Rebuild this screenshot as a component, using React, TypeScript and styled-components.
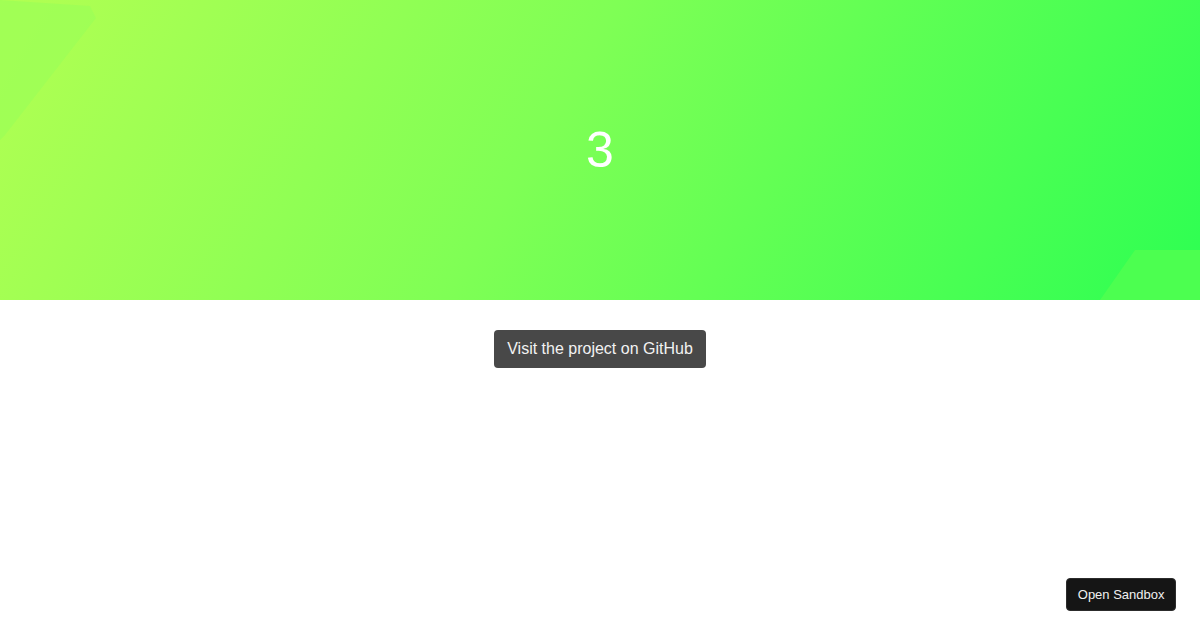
import styled, { createGlobalStyle } from "styled-components";

const GlobalStyle = createGlobalStyle`
  html, body {
    margin: 0;
    padding: 0;
    background: #ffffff;
    font-family: "Liberation Sans", Arial, sans-serif;
  }
`;

const Hero = styled.div`
  position: relative;
  height: 300px;
  display: flex;
  align-items: center;
  justify-content: center;
  overflow: hidden;
  background: linear-gradient(120deg, #b2ff52 0%, #7fff55 45%, #2dff52 100%);
`;

const Slide = styled.span`
  color: #ffffff;
  font-size: 50px;
  font-weight: 400;
  line-height: 1;
`;

const Corner = styled.svg`
  position: absolute;
  pointer-events: none;
`;

const Actions = styled.div`
  display: flex;
  justify-content: center;
  padding-top: 30px;
`;

const GithubButton = styled.a`
  display: inline-flex;
  align-items: center;
  height: 38px;
  padding: 0 13px;
  border-radius: 4px;
  background: #484848;
  color: #f2f2f2;
  font-size: 16px;
  text-decoration: none;
  cursor: pointer;
`;

const SandboxButton = styled.a`
  position: fixed;
  right: 24px;
  bottom: 19px;
  display: inline-flex;
  align-items: center;
  height: 33px;
  padding: 0 10.5px;
  border-radius: 4px;
  border: 1px solid #2c2c2c;
  box-sizing: border-box;
  background: #151515;
  color: #f0f0f0;
  font-size: 13px;
  text-decoration: none;
  cursor: pointer;
`;

export default function App() {
  return (
    <>
      <GlobalStyle />
      <Hero>
        <Corner
          width="96"
          height="140"
          viewBox="0 0 96 140"
          style={{ left: 0, top: 0 }}
        >
          <polygon
            points="0,0 90,6 96,18 5,135 0,140"
            fill="#9cff57"
            opacity="0.75"
          />
        </Corner>
        <Corner
          width="100"
          height="52"
          viewBox="0 0 100 52"
          style={{ right: 0, bottom: 0 }}
        >
          <polygon points="100,2 35,2 0,52 100,52" fill="#4cff50" />
        </Corner>
        <Slide>3</Slide>
      </Hero>
      <Actions>
        <GithubButton>Visit the project on GitHub</GithubButton>
      </Actions>
      <SandboxButton>Open Sandbox</SandboxButton>
    </>
  );
}
